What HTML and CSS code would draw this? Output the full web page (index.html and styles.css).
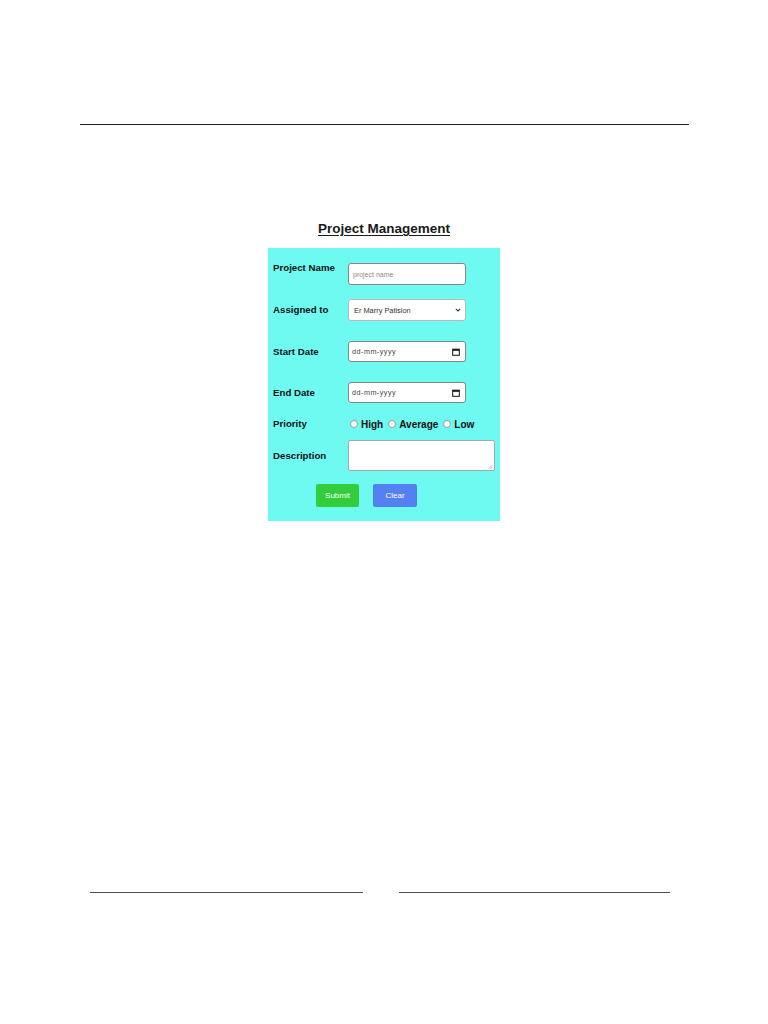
FILE: index.html
```html
<!DOCTYPE html>
<html lang="en">
<head>
<meta charset="utf-8">
<title>Project Management</title>
<link rel="stylesheet" href="styles.css">
</head>
<body>
<div class="page">
  <div class="rule-top"></div>
  <h1 class="title">Project Management</h1>
  <form class="card">
    <div class="row row-name">
      <label class="lbl">Project Name</label>
      <div class="field text"><span class="ph">project name</span></div>
    </div>
    <div class="row row-assign">
      <label class="lbl">Assigned to</label>
      <div class="field select">
        <span class="val">Er Marry Patision</span>
        <svg class="chev" width="6" height="4" viewBox="0 0 6 4"><path d="M0.8 0.8 L3 3 L5.2 0.8" fill="none" stroke="#333" stroke-width="1.1"/></svg>
      </div>
    </div>
    <div class="row row-start">
      <label class="lbl">Start Date</label>
      <div class="field date">
        <span class="val">dd-mm-yyyy</span>
        <svg class="cal" width="8" height="8" viewBox="0 0 8 8"><rect x="0.7" y="1.2" width="6.6" height="6.1" fill="none" stroke="#111" stroke-width="1"/><rect x="0.7" y="1.2" width="6.6" height="1.6" fill="#111"/></svg>
      </div>
    </div>
    <div class="row row-end">
      <label class="lbl">End Date</label>
      <div class="field date">
        <span class="val">dd-mm-yyyy</span>
        <svg class="cal" width="8" height="8" viewBox="0 0 8 8"><rect x="0.7" y="1.2" width="6.6" height="6.1" fill="none" stroke="#111" stroke-width="1"/><rect x="0.7" y="1.2" width="6.6" height="1.6" fill="#111"/></svg>
      </div>
    </div>
    <div class="row row-priority">
      <label class="lbl">Priority</label>
      <div class="radios">
        <span class="radio"><span class="dot"></span>High</span>
        <span class="radio"><span class="dot"></span>Average</span>
        <span class="radio"><span class="dot"></span>Low</span>
      </div>
    </div>
    <div class="row row-desc">
      <label class="lbl">Description</label>
      <div class="field area">
        <svg class="grip" width="5" height="5" viewBox="0 0 5 5"><path d="M4.5 0.8 L0.8 4.5 M4.5 2.8 L2.8 4.5" stroke="#999" stroke-width="0.7"/></svg>
      </div>
    </div>
    <div class="actions">
      <span class="btn submit">Submit</span>
      <span class="btn clear">Clear</span>
    </div>
  </form>
  <div class="signatures">
    <span class="sig"></span>
    <span class="sig"></span>
  </div>
</div>
</body>
</html>
```
FILE: styles.css
```css
html, body {
  margin: 0;
  padding: 0;
  background: #ffffff;
}
.page {
  width: 768px;
  height: 1024px;
  font-family: "Liberation Sans", Arial, sans-serif;
  color: #111;
  padding-top: 124px;
  box-sizing: border-box;
}
.rule-top {
  margin-left: 80px;
  width: 609px;
  height: 0;
  border-top: 1.5px solid #1e1e1e;
}
.title {
  margin: 96px 0 0 0;
  font-size: 13.5px;
  line-height: 16px;
  font-weight: bold;
  text-align: center;
  text-decoration: underline;
  text-underline-offset: 2px;
  color: #1a1a1a;
}
.card {
  margin: 11px auto 0 auto;
  width: 232px;
  height: 273px;
  box-sizing: border-box;
  background: #6ef9f1;
  padding: 14px 0 0 5px;
}
.row {
  display: flex;
  align-items: center;
}
.lbl {
  width: 75px;
  flex: none;
  font-size: 9.7px;
  line-height: 12px;
  font-weight: bold;
  color: #111;
}
.row-name { align-items: flex-start; }
.row-name .field { margin-top: 1px; }
.row-assign { margin-top: 14px; }
.row-start { margin-top: 20px; }
.row-end { margin-top: 20px; }
.row-priority { margin-top: 15px; height: 12px; }
.row-desc { margin-top: 10px; }

.field {
  box-sizing: border-box;
  width: 118px;
  height: 22px;
  background: #fff;
  border: 1px solid #858585;
  border-radius: 3px;
  display: flex;
  align-items: center;
  padding: 0 4px;
  font-size: 7px;
  position: relative;
}
.row-start .field, .row-end .field { height: 21px; }
.ph { color: #8a8a8a; }
.val { color: #333; flex: 1; }
.select { border-color: #b8b8b8; padding-left: 5px; font-size: 7.4px; }
.chev { margin-right: 0; }
.date { padding-left: 3px; font-size: 7.2px; }
.date .val { letter-spacing: 0.5px; color: #444; }
.cal { margin-right: 1px; }
.area {
  width: 147px;
  height: 31px;
  border-color: #a8a8a8;
  border-radius: 2px;
  align-items: flex-end;
  justify-content: flex-end;
  padding: 0 1px 1px 0;
}
.radios {
  display: flex;
  align-items: center;
  padding-left: 2px;
  font-size: 10px;
  font-weight: bold;
}
.radio {
  display: flex;
  align-items: center;
  margin-right: 5px;
}
.dot {
  width: 6px;
  height: 6px;
  border: 0.8px solid #999;
  border-radius: 50%;
  background: #fff;
  margin-right: 3px;
}
.actions {
  display: flex;
  margin-top: 13px;
  padding-left: 43px;
  gap: 14px;
}
.btn {
  width: 43px;
  height: 23px;
  border-radius: 2px;
  color: #fff;
  font-size: 8px;
  display: flex;
  align-items: center;
  justify-content: center;
}
.submit { background: #33cc3a; }
.clear { background: #5580f2; width: 44px; }

.signatures {
  display: flex;
  margin-top: 371px;
  padding-left: 90px;
  gap: 36px;
}
.sig {
  display: block;
  width: 273px;
  border-top: 1.5px solid #505050;
}
.sig + .sig { width: 271px; }
```
